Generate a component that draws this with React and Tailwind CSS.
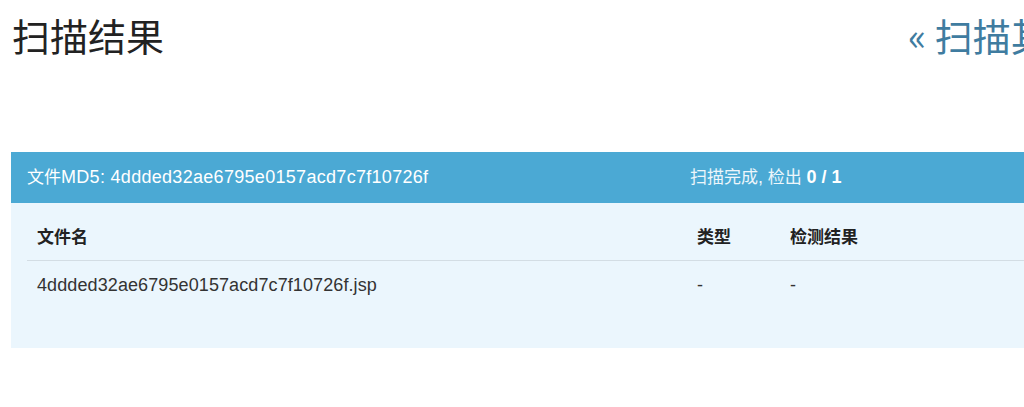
export default function App() {
  const font = { fontFamily: '"Liberation Sans", "Noto Sans CJK SC", sans-serif' };
  return (
    <div className="w-[1024px] h-[407px] bg-white overflow-hidden text-[#333]" style={font}>
      <div className="flex items-start pt-[10px] h-[152px]">
        <h1 className="pl-[12px] text-[38px] font-normal leading-[50px] text-[#222] whitespace-nowrap" style={{ fontFamily: '"Noto Sans CJK SC", sans-serif' }}>扫描结果</h1>
        <div className="flex-1" />
        <a className="w-[116px] overflow-hidden whitespace-nowrap text-[38px] leading-[50px] text-[#3f7ca0]" style={{ fontFamily: '"Noto Sans CJK SC", sans-serif' }}>« 扫描其他文件</a>
      </div>
      <div className="ml-[11px] bg-[#ebf6fd]">
        <div className="flex items-center h-[51px] bg-[#4ba9d4] text-white text-[17px]">
          <div className="w-[679px] pl-[16px] whitespace-nowrap">文件<span className="text-[18px] tracking-[0.3px]">MD5: 4ddded32ae6795e0157acd7c7f10726f</span></div>
          <div className="whitespace-nowrap text-white/90">扫描完成<span className="text-[18px]">,</span> 检出 <span className="font-bold text-white text-[18px]">0 / 1</span></div>
        </div>
        <div className="ml-[16px] pb-[39px]">
          <div className="grid grid-cols-[660px_93px_1fr] h-[58px] items-center border-b border-[#d3dde4] text-[17px] font-bold text-[#222]">
            <div className="pl-[10px] pt-[12px]">文件名</div>
            <div className="pl-[10px] pt-[12px]">类型</div>
            <div className="pl-[10px] pt-[12px]">检测结果</div>
          </div>
          <div className="grid grid-cols-[660px_93px_1fr] h-[48px] items-center text-[18px] text-[#333]">
            <div className="pl-[10px] tracking-[0.1px]">4ddded32ae6795e0157acd7c7f10726f.jsp</div>
            <div className="pl-[10px]">-</div>
            <div className="pl-[10px]">-</div>
          </div>
        </div>
      </div>
    </div>
  );
}
